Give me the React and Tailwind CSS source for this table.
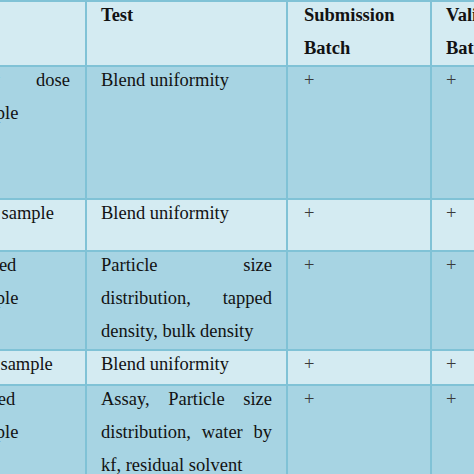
const light = 'bg-[#d4ebf2]'
const dark = 'bg-[#a7d4e3]'

// each line listed by hand; `j` = justified line (not the last of its cell)
const rows = [
  {
    bg: dark,
    sample: [{ t: 'Low dose', j: true }, { t: 'sample' }],
    test: [{ t: 'Blend uniformity' }],
  },
  {
    bg: light,
    sample: [{ t: 'Mid sample' }],
    test: [{ t: 'Blend uniformity' }],
  },
  {
    bg: dark,
    sample: [{ t: 'Sieved' }, { t: 'sample' }],
    test: [
      { t: 'Particle size', j: true },
      { t: 'distribution, tapped', j: true },
      { t: 'density, bulk density' },
    ],
  },
  {
    bg: light,
    sample: [{ t: 'End sample' }],
    test: [{ t: 'Blend uniformity' }],
  },
  {
    bg: dark,
    sample: [{ t: 'Milled' }, { t: 'sample' }],
    test: [
      { t: 'Assay, Particle size', j: true },
      { t: 'distribution, water by', j: true },
      { t: 'kf, residual solvent' },
    ],
  },
]

function Lines({ lines }) {
  return (
    <div className="-mt-[3px]">
      {lines.map((l, i) => (
        <div
          key={i}
          className={l.j ? 'text-justify [text-align-last:justify] whitespace-nowrap' : 'text-left whitespace-nowrap'}
        >
          {l.t}
        </div>
      ))}
    </div>
  )
}

export default function App() {
  return (
    <div className="w-[474px] h-[474px] overflow-hidden bg-white">
      <div className="ml-[-49px] w-[621px] pt-[2px] bg-[#80c2d6] grid grid-cols-[134px_199px_142px_140px] grid-rows-[63px_131px_50px_97px_33px_94px] gap-[2px] [font-family:'Liberation_Serif','Times_New_Roman',serif] text-[18.5px] leading-[33px] text-[#121212]">

        {/* Header */}
        <div className={`${light} pl-[15px] pr-[15px]`} />
        <div className={`${light} pl-[14px] pr-[14px] font-bold`}>
          <Lines lines={[{ t: 'Test' }]} />
        </div>
        <div className={`${light} pl-[16px] font-bold`}>
          <Lines lines={[{ t: 'Submission' }, { t: 'Batch' }]} />
        </div>
        <div className={`${light} pl-[14px] font-bold`}>
          <Lines lines={[{ t: 'Validation' }, { t: 'Batch' }]} />
        </div>

        {rows.map((r, i) => (
          <div key={i} className="contents">
            <div className={`${r.bg} pl-[15px] pr-[15px]`}>
              <Lines lines={r.sample} />
            </div>
            <div className={`${r.bg} pl-[14px] pr-[14px]`}>
              <Lines lines={r.test} />
            </div>
            <div className={`${r.bg} pl-[16px] text-[#3a3a3a]`}>
              <Lines lines={[{ t: '+' }]} />
            </div>
            <div className={`${r.bg} pl-[14px] text-[#3a3a3a]`}>
              <Lines lines={[{ t: '+' }]} />
            </div>
          </div>
        ))}
      </div>
    </div>
  )
}
